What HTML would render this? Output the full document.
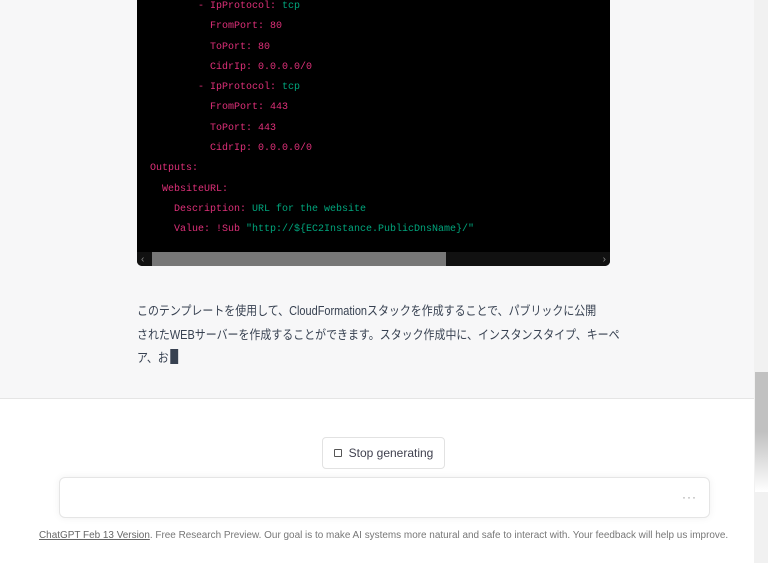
<!DOCTYPE html>
<html><head><meta charset="utf-8"><style>
*{margin:0;padding:0;box-sizing:border-box}
body{width:768px;height:563px;overflow:hidden;background:#fff;position:relative;font-family:"Liberation Sans","Noto Sans CJK JP",sans-serif}
.top{position:absolute;left:0;top:0;width:754px;height:399px;background:#f7f7f8;border-bottom:1px solid #e5e5e5}
.code{position:absolute;left:137px;top:0;width:473px;height:266px;background:#000;border-radius:0 0 5px 5px;overflow:hidden}
.code pre{position:absolute;left:13px;top:-3px;font-family:"Liberation Mono",monospace;font-size:10px;line-height:20.3px;color:#df3079}
.g{color:#00a67d}
.hs{position:absolute;left:0;bottom:0;width:473px;height:14px;background:#111}
.thumb{position:absolute;left:15px;bottom:0;width:294px;height:14px;background:#777}
.ar{position:absolute;bottom:1px;color:#888;font-size:10px}
.p{position:absolute;left:137px;top:300px;font-size:12.5px;line-height:23.5px;color:#374151;white-space:nowrap;transform:scaleX(0.876);transform-origin:0 0}
.cur{display:inline-block;width:9px;height:15px;background:#374151;vertical-align:-2px;margin-left:2px}
.btn{position:absolute;left:322px;top:437px;width:123px;height:32px;border:1px solid #e2e2e2;border-radius:4px;background:#fff;font-size:12px;color:#40414f;display:flex;align-items:center;justify-content:center;gap:7px}
.btn i{width:8px;height:8px;border:1px solid #555;border-radius:1px}
.inp{position:absolute;left:59px;top:477px;width:651px;height:41px;border:1px solid #e5e5e5;border-radius:6px;background:#fff;box-shadow:0 0 8px rgba(0,0,0,.06)}
.dots{position:absolute;right:12px;top:12px;color:#999;font-size:12px;letter-spacing:1px}
.foot{position:absolute;left:39px;top:530px;font-size:9.95px;color:#777;white-space:nowrap}
.foot u{color:#666}
.sb{position:absolute;right:0;top:0;width:14px;height:563px;background:#f1f1f1}
.sbt{position:absolute;right:0;top:372px;width:13px;height:120px;background:linear-gradient(#c1c1c1 50%,#fff)}
</style></head><body>
<div class="top"></div>
<div class="code"><pre>        - IpProtocol: <span class="g">tcp</span>
          FromPort: 80
          ToPort: 80
          CidrIp: 0.0.0.0/0
        - IpProtocol: <span class="g">tcp</span>
          FromPort: 443
          ToPort: 443
          CidrIp: 0.0.0.0/0
Outputs:
  WebsiteURL:
    Description: <span class="g">URL for the website</span>
    Value: !Sub <span class="g">"http://${EC2Instance.PublicDnsName}/"</span></pre>
<div class="hs"><div class="thumb"></div><span class="ar" style="left:4px">‹</span><span class="ar" style="right:4px">›</span></div></div>
<div class="p">このテンプレートを使用して、CloudFormationスタックを作成することで、パブリックに公開<br>されたWEBサーバーを作成することができます。スタック作成中に、インスタンスタイプ、キーペ<br>ア、お<span class="cur"></span></div>
<div class="btn"><i></i>Stop generating</div>
<div class="inp"><span class="dots">···</span></div>
<div class="foot"><u>ChatGPT Feb 13 Version</u>. Free Research Preview. Our goal is to make AI systems more natural and safe to interact with. Your feedback will help us improve.</div>
<div class="sb"></div><div class="sbt"></div>
</body></html>
